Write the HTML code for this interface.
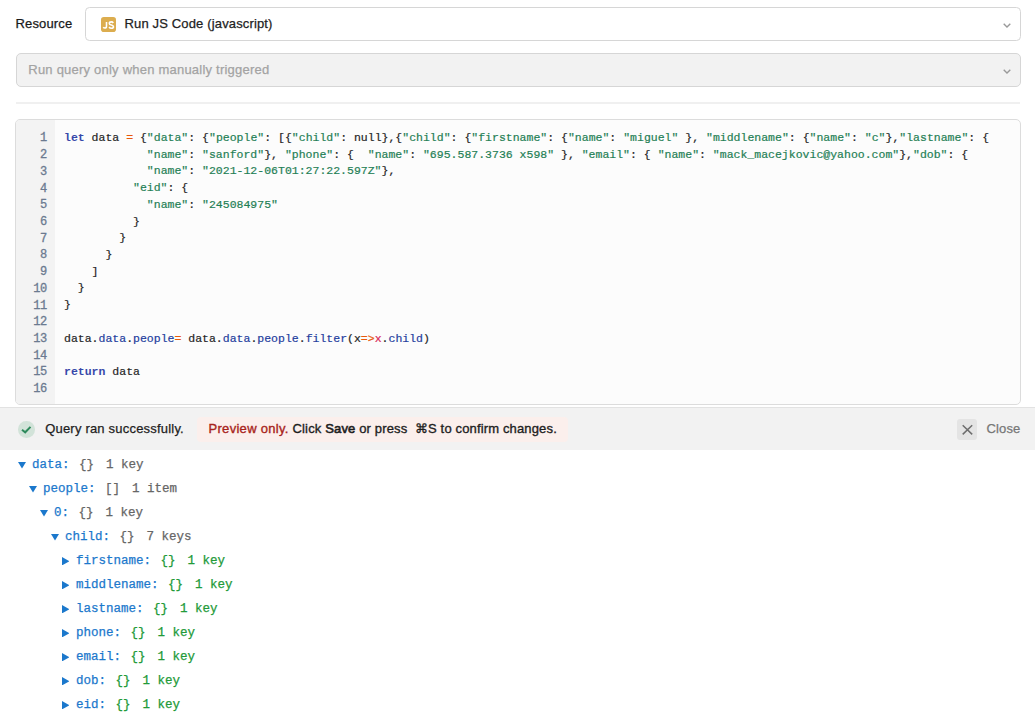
<!DOCTYPE html>
<html><head><meta charset="utf-8">
<style>
*{box-sizing:border-box;}
html,body{margin:0;padding:0;background:#fff;width:1035px;height:721px;overflow:hidden;}
body{font-family:"Liberation Sans",sans-serif;font-size:13px;color:#222;position:relative;}
.abs{-webkit-text-stroke:0.25px currentColor;}
.sb{-webkit-text-stroke:0.6px currentColor;}
.abs{position:absolute;white-space:pre;line-height:15px;}
.lbl{left:15.5px;top:16.3px;color:#1a1a1a;letter-spacing:0.15px;}
.sel{left:85px;top:7px;width:935.5px;height:34px;border:1px solid #d6d6d6;border-radius:4.5px;background:#fff;}
.js{left:100.5px;top:16.9px;width:15.5px;height:15.3px;background:#dcad4f;border-radius:2.8px;}
.seltxt{left:124.5px;top:16.3px;color:#222;letter-spacing:0.15px;}
.chev{width:8px;height:5px;}
.sel2{left:15.5px;top:53px;width:1005px;height:34px;border:1px solid #d6d6d6;border-radius:5px;background:#f2f2f2;}
.sel2txt{left:28.3px;top:61.8px;color:#a3a3a3;letter-spacing:0.22px;}
.hr{left:16px;top:102px;width:1004px;height:2px;background:#f0f0f0;}
.ed{left:15px;top:119.3px;width:1006px;height:285.5px;border:1px solid #dcdcdc;border-radius:5px;background:#fcfcfc;overflow:hidden;}
.gut{left:0;top:0;width:39px;height:100%;background:#f3f3f3;}
.cl{position:absolute;left:0;width:1035px;height:16px;line-height:16px;}
.ln{position:absolute;top:0.5px;left:0;width:47px;text-align:right;font-family:"Liberation Mono",monospace;font-size:12px;letter-spacing:-0.3px;-webkit-text-stroke:0.3px currentColor;color:#6b7a90;}
.code{position:absolute;left:64px;-webkit-text-stroke:0.2px currentColor;white-space:pre;font-family:"Liberation Mono",monospace;font-size:11.5px;color:#252525;}
.k{color:#3748aa;font-weight:bold;-webkit-text-stroke:0;}
.s{color:#1f7f55;}
.o{color:#e8590c;}
.p{color:#1f3e9e;}
.r{color:#d9285a;}
.status{left:0;top:407px;width:1035px;height:43px;background:#f2f2f2;border-top:1px solid #e2e2e2;}
.chk{left:18px;top:421px;width:16.5px;height:16.5px;border-radius:50%;background:#d2e3d9;}
.qtxt{left:45.2px;top:421.2px;color:#1e1e1e;letter-spacing:0.2px;}
.pill{left:196.5px;top:417px;width:371px;height:24.5px;background:#fbefec;border-radius:4px;}
.ptxt{left:208.5px;top:421.4px;color:#1e1e1e;letter-spacing:0.15px;-webkit-text-stroke:0.35px currentColor;}
.red{color:#a8241b;letter-spacing:0.3px;}
.xbtn{left:957px;top:419px;width:20px;height:21px;background:#e4e4e4;border-radius:3px;}
.close{left:986.5px;top:421.3px;color:#777;letter-spacing:0.15px;}
.tri{position:absolute;}
.row{position:absolute;-webkit-text-stroke:0.25px currentColor;height:24px;line-height:24px;white-space:pre;font-family:"Liberation Mono",monospace;font-size:12.5px;}
.key{color:#1b78cc;}
.gr{color:#666;}
.gn{color:#229a38;}

</style></head><body>
<div class="abs lbl">Resource</div>
<div class="abs sel"></div>
<div class="abs js"><svg width="15.5" height="15.3" viewBox="0 0 15.5 15.3" style="position:absolute;left:0;top:0"><path d="M5.5 4.9V9.2C5.5 10.5 4.8 11.1 3.8 11.1C3.1 11.1 2.6 10.8 2.3 10.2" fill="none" stroke="#fff" stroke-width="1.55"/><path transform="translate(-0.4 0)" d="M12.7 6C12.3 5.3 11.6 4.9 10.7 4.9C9.5 4.9 8.7 5.5 8.7 6.5C8.7 8.5 12.9 7.7 12.9 9.7C12.9 10.7 12 11.2 10.8 11.2C9.8 11.2 9 10.8 8.5 10" fill="none" stroke="#fff" stroke-width="1.55"/></svg></div>
<div class="abs seltxt">Run JS Code (javascript)</div>
<svg class="abs chev" style="left:1003.4px;top:22.8px" viewBox="0 0 8 5"><path d="M0.7 0.7L4 4L7.3 0.7" fill="none" stroke="#999" stroke-width="1.35"/></svg>
<div class="abs sel2"></div>
<div class="abs sel2txt">Run query only when manually triggered</div>
<svg class="abs chev" style="left:1003.4px;top:68.8px" viewBox="0 0 8 5"><path d="M0.7 0.7L4 4L7.3 0.7" fill="none" stroke="#999" stroke-width="1.35"/></svg>
<div class="abs hr"></div>
<div class="abs ed"><div class="abs gut"></div></div>
<div class="cl" style="top:129.90px"><span class="ln">1</span><span class="code"><span class="k">let</span> data <span class="o">=</span> {<span class="s">"data"</span>: {<span class="s">"people"</span>: [{<span class="s">"child"</span>: null},{<span class="s">"child"</span>: {<span class="s">"firstname"</span>: {<span class="s">"name"</span>: <span class="s">"miguel"</span> }, <span class="s">"middlename"</span>: {<span class="s">"name"</span>: <span class="s">"c"</span>},<span class="s">"lastname"</span>: {</span></div><div class="cl" style="top:146.62px"><span class="ln">2</span><span class="code">            <span class="s">"name"</span>: <span class="s">"sanford"</span>}, <span class="s">"phone"</span>: {  <span class="s">"name"</span>: <span class="s">"695.587.3736 x598"</span> }, <span class="s">"email"</span>: { <span class="s">"name"</span>: <span class="s">"mack_macejkovic@yahoo.com"</span>},<span class="s">"dob"</span>: {</span></div><div class="cl" style="top:163.34px"><span class="ln">3</span><span class="code">            <span class="s">"name"</span>: <span class="s">"2021-12-06T01:27:22.597Z"</span>},</span></div><div class="cl" style="top:180.06px"><span class="ln">4</span><span class="code">          <span class="s">"eid"</span>: {</span></div><div class="cl" style="top:196.78px"><span class="ln">5</span><span class="code">            <span class="s">"name"</span>: <span class="s">"245084975"</span></span></div><div class="cl" style="top:213.50px"><span class="ln">6</span><span class="code">          }</span></div><div class="cl" style="top:230.22px"><span class="ln">7</span><span class="code">        }</span></div><div class="cl" style="top:246.94px"><span class="ln">8</span><span class="code">      }</span></div><div class="cl" style="top:263.66px"><span class="ln">9</span><span class="code">    ]</span></div><div class="cl" style="top:280.38px"><span class="ln">10</span><span class="code">  }</span></div><div class="cl" style="top:297.10px"><span class="ln">11</span><span class="code">}</span></div><div class="cl" style="top:313.82px"><span class="ln">12</span><span class="code"></span></div><div class="cl" style="top:330.54px"><span class="ln">13</span><span class="code">data.<span class="p">data</span>.<span class="p">people</span><span class="o">=</span> data.<span class="p">data</span>.<span class="p">people</span>.<span class="p">filter</span>(x<span class="o">=&gt;</span><span class="r">x</span>.<span class="p">child</span>)</span></div><div class="cl" style="top:347.26px"><span class="ln">14</span><span class="code"></span></div><div class="cl" style="top:363.98px"><span class="ln">15</span><span class="code"><span class="k">return</span> data</span></div><div class="cl" style="top:380.70px"><span class="ln">16</span><span class="code"></span></div>
<div class="abs status"></div>
<div class="abs chk"><svg width="16.5" height="16.5" viewBox="0 0 16.5 16.5" style="position:absolute;left:0;top:0"><path d="M4 8.7L7.2 11.3L12.5 5.9" fill="none" stroke="#2e8a5c" stroke-width="2"/></svg></div>
<div class="abs qtxt">Query ran successfully.</div>
<div class="abs pill"></div>
<div class="abs ptxt"><span class="red">Preview only.</span> Click <span class="sb">Save</span> or press &nbsp;⌘S to confirm changes.</div>
<div class="abs xbtn"><svg width="20" height="21" viewBox="0 0 20 21" style="position:absolute;left:0;top:0"><path d="M5.7 6.2L15.2 15.4M15.2 6.2L5.7 15.4" stroke="#6e6e6e" stroke-width="1.5"/></svg></div>
<div class="abs close">Close</div>
<svg class="tri" style="left:18.2px;top:461.8px" width="8" height="7" viewBox="0 0 8 7"><path d="M0 0H8L4 6.5Z" fill="#1b78cc"/></svg><div class="row key" style="left:32.0px;top:452.8px">data:</div><div class="row gr" style="left:79.1px;top:452.8px">{}</div><div class="row gr" style="left:105.9px;top:452.8px">1 key</div><svg class="tri" style="left:29.1px;top:485.8px" width="8" height="7" viewBox="0 0 8 7"><path d="M0 0H8L4 6.5Z" fill="#1b78cc"/></svg><div class="row key" style="left:43.0px;top:476.8px">people:</div><div class="row gr" style="left:105.1px;top:476.8px">[]</div><div class="row gr" style="left:131.9px;top:476.8px">1 item</div><svg class="tri" style="left:40.0px;top:509.8px" width="8" height="7" viewBox="0 0 8 7"><path d="M0 0H8L4 6.5Z" fill="#1b78cc"/></svg><div class="row key" style="left:54.0px;top:500.8px">0:</div><div class="row gr" style="left:78.6px;top:500.8px">{}</div><div class="row gr" style="left:105.4px;top:500.8px">1 key</div><svg class="tri" style="left:50.9px;top:533.8px" width="8" height="7" viewBox="0 0 8 7"><path d="M0 0H8L4 6.5Z" fill="#1b78cc"/></svg><div class="row key" style="left:65.0px;top:524.8px">child:</div><div class="row gr" style="left:119.6px;top:524.8px">{}</div><div class="row gr" style="left:146.4px;top:524.8px">7 keys</div><svg class="tri" style="left:61.6px;top:556.6px" width="7.5" height="8.4" viewBox="0 0 7.5 8.4"><path d="M0 0L7.5 4.2L0 8.4Z" fill="#1b78cc"/></svg><div class="row key" style="left:76.0px;top:548.8px">firstname:</div><div class="row gn" style="left:160.6px;top:548.8px">{}</div><div class="row gn" style="left:187.4px;top:548.8px">1 key</div><svg class="tri" style="left:61.6px;top:580.6px" width="7.5" height="8.4" viewBox="0 0 7.5 8.4"><path d="M0 0L7.5 4.2L0 8.4Z" fill="#1b78cc"/></svg><div class="row key" style="left:76.0px;top:572.8px">middlename:</div><div class="row gn" style="left:168.1px;top:572.8px">{}</div><div class="row gn" style="left:194.9px;top:572.8px">1 key</div><svg class="tri" style="left:61.6px;top:604.6px" width="7.5" height="8.4" viewBox="0 0 7.5 8.4"><path d="M0 0L7.5 4.2L0 8.4Z" fill="#1b78cc"/></svg><div class="row key" style="left:76.0px;top:596.8px">lastname:</div><div class="row gn" style="left:153.1px;top:596.8px">{}</div><div class="row gn" style="left:179.9px;top:596.8px">1 key</div><svg class="tri" style="left:61.6px;top:628.6px" width="7.5" height="8.4" viewBox="0 0 7.5 8.4"><path d="M0 0L7.5 4.2L0 8.4Z" fill="#1b78cc"/></svg><div class="row key" style="left:76.0px;top:620.8px">phone:</div><div class="row gn" style="left:130.6px;top:620.8px">{}</div><div class="row gn" style="left:157.4px;top:620.8px">1 key</div><svg class="tri" style="left:61.6px;top:652.6px" width="7.5" height="8.4" viewBox="0 0 7.5 8.4"><path d="M0 0L7.5 4.2L0 8.4Z" fill="#1b78cc"/></svg><div class="row key" style="left:76.0px;top:644.8px">email:</div><div class="row gn" style="left:130.6px;top:644.8px">{}</div><div class="row gn" style="left:157.4px;top:644.8px">1 key</div><svg class="tri" style="left:61.6px;top:676.6px" width="7.5" height="8.4" viewBox="0 0 7.5 8.4"><path d="M0 0L7.5 4.2L0 8.4Z" fill="#1b78cc"/></svg><div class="row key" style="left:76.0px;top:668.8px">dob:</div><div class="row gn" style="left:115.6px;top:668.8px">{}</div><div class="row gn" style="left:142.4px;top:668.8px">1 key</div><svg class="tri" style="left:61.6px;top:700.6px" width="7.5" height="8.4" viewBox="0 0 7.5 8.4"><path d="M0 0L7.5 4.2L0 8.4Z" fill="#1b78cc"/></svg><div class="row key" style="left:76.0px;top:692.8px">eid:</div><div class="row gn" style="left:115.6px;top:692.8px">{}</div><div class="row gn" style="left:142.4px;top:692.8px">1 key</div>

</body></html>
